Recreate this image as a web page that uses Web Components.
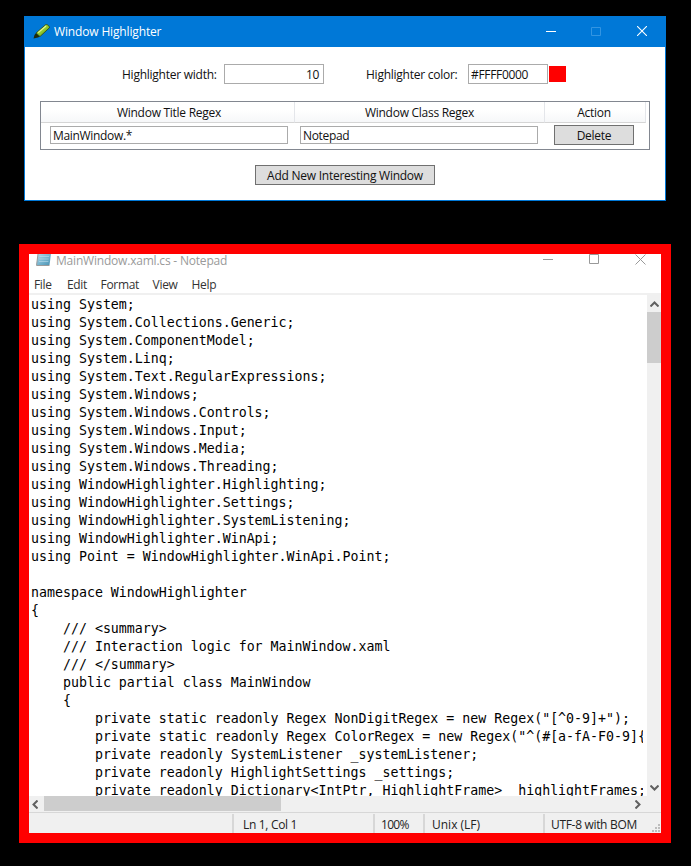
<!DOCTYPE html>
<html><head><meta charset="utf-8"><title>Window Highlighter</title>
<style>
html,body{margin:0;padding:0;background:#000;}
body{width:691px;height:866px;overflow:hidden;display:flex;flex-direction:column;}
</style></head><body>
<wh-window></wh-window>
<np-window>using System;
using System.Collections.Generic;
using System.ComponentModel;
using System.Linq;
using System.Text.RegularExpressions;
using System.Windows;
using System.Windows.Controls;
using System.Windows.Input;
using System.Windows.Media;
using System.Windows.Threading;
using WindowHighlighter.Highlighting;
using WindowHighlighter.Settings;
using WindowHighlighter.SystemListening;
using WindowHighlighter.WinApi;
using Point = WindowHighlighter.WinApi.Point;

namespace WindowHighlighter
{
    /// &lt;summary&gt;
    /// Interaction logic for MainWindow.xaml
    /// &lt;/summary&gt;
    public partial class MainWindow
    {
        private static readonly Regex NonDigitRegex = new Regex("[^0-9]+");
        private static readonly Regex ColorRegex = new Regex("^(#[a-fA-F0-9]{
        private readonly SystemListener _systemListener;
        private readonly HighlightSettings _settings;
        private readonly Dictionary&lt;IntPtr, HighlightFrame&gt; _highlightFrames;</np-window>
<script>
const UI='"Open Sans","Noto Sans",sans-serif';
class WfInput extends HTMLElement{
  constructor(){super();this.attachShadow({mode:'open'}).innerHTML=`<style>
  :host{display:block;box-sizing:border-box;height:20px;border:1px solid #ababab;background:#fff;color:#111;font:12px/20px ${UI};letter-spacing:-.32px;padding:0 4px 0 2px;white-space:nowrap;overflow:hidden}
  :host([right]){text-align:right;padding-right:4px}
  </style><slot></slot>`;}
}
class WfButton extends HTMLElement{
  constructor(){super();this.attachShadow({mode:'open'}).innerHTML=`<style>
  :host{display:flex;align-items:center;justify-content:center;box-sizing:border-box;height:20px;padding-top:2px;border:1px solid #707070;background:#dddddd;color:#111;font:12px/16px ${UI};letter-spacing:-.25px;white-space:nowrap}
  </style><slot></slot>`;}
}
class WfHead extends HTMLElement{
  constructor(){super();this.attachShadow({mode:'open'}).innerHTML=`<style>
  :host{display:flex;align-items:center;justify-content:center;box-sizing:border-box;height:21px;padding-top:2px;border-right:1px solid #e4e6ea;border-bottom:1px solid #d5d5d5;background:linear-gradient(#fff 0 40%,#f6f7f9);color:#111;font:12px/16px ${UI};letter-spacing:-.27px;white-space:nowrap}
  </style><slot></slot>`;}
}
class WhWindow extends HTMLElement{
  constructor(){super();this.attachShadow({mode:'open'}).innerHTML=`<style>
  :host{display:block;box-sizing:border-box;width:642px;height:185px;margin:16px 0 0 24px;border:1px solid #0078d7;background:#fff;color:#111;font:12px/18px ${UI};letter-spacing:-.25px;flex:none}
  .title{height:30px;background:#0078d7;color:#fff;display:flex;align-items:center;padding-left:8px}
  .title svg.logo{width:17px;height:15px;margin-right:4px;flex:none;position:relative;top:-1px}
  .title span{flex:1;letter-spacing:-.15px}
  .caps{display:flex;align-items:center;height:30px}
  .caps div{width:46px;height:30px;box-sizing:border-box;padding-bottom:2px;display:flex;align-items:center;justify-content:center}
  .caps div:first-child{padding-left:2px}
  .settings{display:flex;align-items:center;height:20px;margin-top:17px;padding-left:97px}
  .settings .l1,.settings .l2{width:102px;flex:none;padding-top:2px;line-height:16px}
  .w{width:100px;flex:none;margin-right:42px}
  .c{width:80px;flex:none}
  .sw{width:17px;height:16px;background:#f00;margin-left:1px;flex:none}
  .table{box-sizing:border-box;width:610px;height:49px;margin:17px 0 0 15px;border:1px solid #828790;display:grid;grid-template-columns:254px 250px 101px;grid-template-rows:21px 1fr}
  .cell{display:flex;align-items:flex-start;padding:3px 7px 0 9px}
  .cell wf-input{width:100%;height:18px;line-height:18px}
  .cell.second{padding-left:5px}
  .cell.act{padding:2px 11px 0 9px}
  .cell.act wf-button{width:80px}
  .add{display:flex;justify-content:center;margin-top:15px}
  .add wf-button{width:180px}
  </style>
  <div class="title">
    <svg class="logo" viewBox="0 0 17 15">
      <defs><linearGradient id="g" x1="0" y1="0" x2="1" y2="1"><stop offset="0" stop-color="#c4ea58"/><stop offset=".55" stop-color="#8cc62a"/><stop offset="1" stop-color="#4f8410"/></linearGradient></defs>
      <path d="M0.5 14.5L1.5 11L3 9L7 12.5L5 13.6Z" fill="#1f2b0a"/>
      <path d="M3 9L12.8 .6Q13.6 .2 14.4 .8L16.4 2.6Q16.8 3.4 16.2 4L7 12.5Z" fill="url(#g)" stroke="#2d4210" stroke-width=".8"/>
      <path d="M5.2 8.6L13 2" stroke="#e0f59a" stroke-width="1.2"/>
    </svg>
    <span>Window Highlighter</span>
    <div class="caps">
      <div><svg width="10" height="10" viewBox="0 0 10 10"><path d="M0 5.5H10" stroke="#fff"/></svg></div>
      <div><svg width="10" height="10" viewBox="0 0 10 10"><path d="M.5 1.5H9.5V9.5H.5Z" fill="none" stroke="#3395e2"/></svg></div>
      <div><svg width="10" height="10" viewBox="0 0 10 10"><path d="M0 0L10 10M10 0L0 10" stroke="#fff" stroke-width="1.1" fill="none"/></svg></div>
    </div>
  </div>
  <div class="settings">
    <div class="l1">Highlighter width:</div><wf-input class="w" right>10</wf-input>
    <div class="l2">Highlighter color:</div><wf-input class="c">#FFFF0000</wf-input><div class="sw"></div>
  </div>
  <div class="table">
    <wf-head style="padding-left:3px">Window Title Regex</wf-head><wf-head>Window Class Regex</wf-head><wf-head style="padding-right:2px">Action</wf-head>
    <div class="cell"><wf-input>MainWindow.*</wf-input></div>
    <div class="cell second"><wf-input>Notepad</wf-input></div>
    <div class="cell act"><wf-button>Delete</wf-button></div>
  </div>
  <div class="add"><wf-button>Add New Interesting Window</wf-button></div>`;}
}
class NpWindow extends HTMLElement{
  constructor(){super();this.attachShadow({mode:'open'}).innerHTML=`<style>
  :host{display:flex;flex-direction:column;box-sizing:border-box;width:652px;height:599px;margin:43px 0 0 19px;border:10px solid #f00;background:#fff;flex:none;font:12px/18px ${UI};letter-spacing:-.32px;color:#111;overflow:hidden}
  .title{height:20px;display:flex;align-items:flex-start;color:#9a9a9a;padding-left:7px;flex:none;position:relative;letter-spacing:-.2px}
  .title svg.i{width:15px;height:12px;margin-right:5px;flex:none}
  .title span{flex:1;line-height:14px}
  .caps{display:flex;position:absolute;right:-2px;top:-5px}
  .caps div{width:46px;height:20px;display:flex;align-items:center;justify-content:center}
  .menu{height:18px;margin-top:1px;padding:1px 0 0 5px;box-sizing:border-box;display:flex;align-items:center;flex:none;color:#333}
  .menu span{flex:none}
  .sep{height:2px;background:#f0f0f0;flex:none}
  .mid{flex:1;min-height:0;display:grid;grid-template-columns:1fr 14px;grid-template-rows:1fr}
  .text{margin:0 4px 0 0;padding:1px 0 0 2px;font:13.28px/18px "DejaVu Sans Mono",monospace;letter-spacing:0;color:#000;overflow:hidden;white-space:pre}
  .vs{background:#f0f0f0;display:flex;flex-direction:column}
  .vs .b{height:17px;display:flex;align-items:center;justify-content:center;flex:none}
  .vs .th{height:51px;background:#cdcdcd;flex:none}
  .vs .sp{flex:1}
  .hs{height:16px;background:#f0f0f0;display:flex;flex:none}
  .hs .b{width:15px;box-sizing:border-box;padding-right:3px;display:flex;align-items:center;justify-content:center;flex:none}
  .hs .th{width:237px;background:#cdcdcd;height:15px;flex:none}
  .hs .sp{flex:1}
  .hs .c{width:14px;flex:none}
  .status{height:21px;border-top:1px solid #d7d7d7;background:#f0f0f0;display:grid;grid-template-columns:203px 141px 50px 120px 1fr;flex:none;position:relative;box-sizing:border-box}
  .status div{margin-top:1px;padding-left:6px;border-left:0 solid #d7d7d7;line-height:22px;white-space:nowrap;color:#222}
  .status div+div{border-left-width:2px}
  .status div:first-child{padding:0}
  .status div:nth-child(2){padding-left:9px}
  .status div:nth-child(3){letter-spacing:-.7px}
  .status div:nth-child(4){letter-spacing:0;padding-left:7px}
  .grip{position:absolute;right:0;bottom:0}
  </style>
  <div class="title">
    <svg class="i" viewBox="0 0 15 12"><defs><linearGradient id="n" x1="0" y1="0" x2="1" y2="1"><stop offset="0" stop-color="#b4dcec"/><stop offset=".6" stop-color="#6fb0cc"/><stop offset="1" stop-color="#4a90b0"/></linearGradient></defs><path d="M2 0H15L13.5 11H0.5Z" fill="url(#n)"/><path d="M3.5 2.5H13M3.2 5H12.7M3 7.5H12.4" stroke="#d4ecf6" stroke-opacity=".45"/><path d="M2 0L.5 11.5H13.5" fill="none" stroke="#9a9a9a"/></svg>
    <span>MainWindow.xaml.cs - Notepad</span>
    <div class="caps">
      <div><svg width="10" height="10" viewBox="0 0 10 10"><path d="M0 5.5H10" stroke="#999"/></svg></div>
      <div><svg width="10" height="10" viewBox="0 0 10 10"><path d="M.5 .5H9.5V9.5H.5Z" fill="none" stroke="#999"/></svg></div>
      <div><svg width="11" height="11" viewBox="0 0 11 11"><path d="M.5 .5L10.5 10.5M10.5 .5L.5 10.5" stroke="#999" fill="none"/></svg></div>
    </div>
  </div>
  <div class="menu"><span style="width:33px">File</span><span style="width:33.6px">Edit</span><span style="width:52px">Format</span><span style="width:39px">View</span><span>Help</span></div>
  <div class="sep"></div>
  <div class="mid"><pre class="text"><slot></slot></pre>
    <div class="vs">
      <div class="b"><svg width="9" height="6" viewBox="0 0 9 6"><path d="M.5 5.5L4.5 1.5L8.5 5.5" fill="none" stroke="#606060" stroke-width="2"/></svg></div>
      <div class="th"></div><div class="sp"></div>
      <div class="b"><svg width="9" height="6" viewBox="0 0 9 6"><path d="M.5 .5L4.5 4.5L8.5 .5" fill="none" stroke="#606060" stroke-width="2"/></svg></div>
    </div>
  </div>
  <div class="hs">
    <div class="b"><svg width="6" height="9" viewBox="0 0 6 9"><path d="M5.5 .5L1.5 4.5L5.5 8.5" fill="none" stroke="#606060" stroke-width="2"/></svg></div>
    <div class="th"></div><div class="sp"></div>
    <div class="b"><svg width="6" height="9" viewBox="0 0 6 9"><path d="M.5 .5L4.5 4.5L.5 8.5" fill="none" stroke="#606060" stroke-width="2"/></svg></div>
    <div class="c"></div>
  </div>
  <div class="status">
    <div></div><div>Ln 1, Col 1</div><div>100%</div><div>Unix (LF)</div><div>UTF-8 with BOM</div>
    <svg class="grip" width="9" height="9" viewBox="0 0 9 9" fill="#bdbdbd"><rect x="6" y="0" width="2" height="2"/><rect x="3" y="3" width="2" height="2"/><rect x="6" y="3" width="2" height="2"/><rect x="0" y="6" width="2" height="2"/><rect x="3" y="6" width="2" height="2"/><rect x="6" y="6" width="2" height="2"/></svg>
  </div>`;}
}
customElements.define('wf-input',WfInput);
customElements.define('wf-button',WfButton);
customElements.define('wf-head',WfHead);
customElements.define('wh-window',WhWindow);
customElements.define('np-window',NpWindow);
</script>
</body></html>
